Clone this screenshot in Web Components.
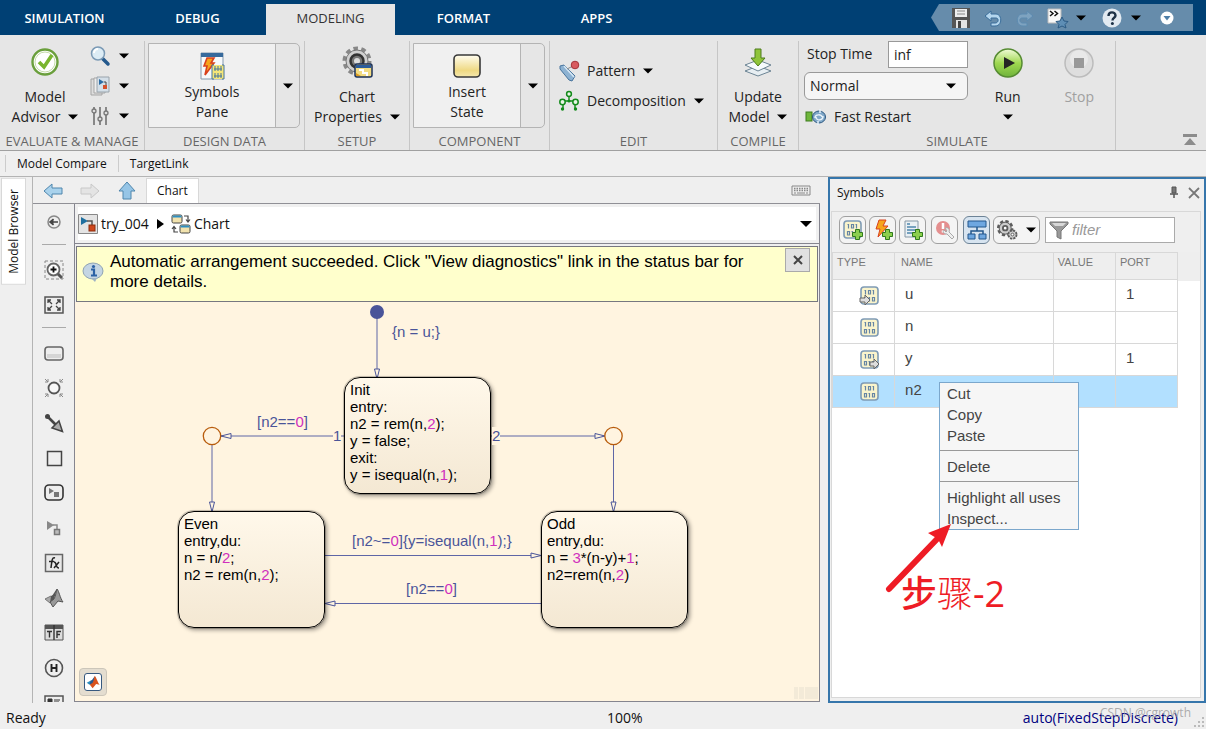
<!DOCTYPE html>
<html lang="en">
<head>
<meta charset="utf-8">
<title>Chart</title>
<style>
    html, body {
        margin: 0;
        height: 100%;
    }

    body {
        background: #efefef;
        color: #111;
        font: 14px/20px "Open Sans", "Noto Sans", sans-serif;
    }
</style>
</head>
<body>
<chart-editor-app></chart-editor-app>

<script>
const PLUS = `<path d="M12.5 9.5h4v3h3v4h-3v3h-4v-3h-3v-4h3z" fill="#8ccf4d" stroke="#2f7a1c"/>`;
const DATA = `<rect x="1" y="1" width="17" height="17" rx="3" fill="#faf4cc" stroke="#7f9bb5" stroke-width="1.6"/>
    <path d="M5.500 4v4.500M4.500 4.500h1M13.500 4v4.500M12.500 4.500h1M9.500 11v4.500M8.500 11.500h1" stroke="#6685a3" stroke-width="1.200" fill="none"/>
    <path d="M8.500 4.500h2v3.500h-2zM4.500 11.500h2v3.500h-2zM12.500 11.500h2v3.500h-2z" stroke="#6685a3" stroke-width="1.200" fill="none"/>`;
const PEAK = (a, b, c) => `<path d="M1 11l6-3 2 2-4 4z" fill="${a}"/><path d="M7 8c3-1 4-6 6-6l-2 9-3 4-3-2z" fill="${b}"/><path d="M12.500 1c2 2 4 9 7 13l-5-1-5 6-4-5 4-3c2-3 2-8 3-10z" fill="${c}"/>`;

// every icon is [viewBox size, markup]
const ICONS = {
    caret: [10, `<path d="M0 2.500h10L5 7.500z" fill="#000"/>`],
    caretRight: [10, `<path d="M2 0v10L9 5z" fill="#000"/>`],
    check: [32, `<circle cx="16" cy="16" r="12.500" fill="#fff" stroke="#6a9f3c" stroke-width="2.400"/><circle cx="16" cy="16" r="10" fill="none" stroke="#c5dba9"/><path d="M10 16l5 5 8-12" fill="none" stroke="#79b52f" stroke-width="3.600"/>`],
    magnifier: [20, `<path d="M12 12l6 6" stroke="#24598d" stroke-width="3.500" stroke-linecap="round"/><circle cx="8" cy="7.500" r="6.500" fill="#dcecf5" stroke="#7b9ab5" stroke-width="1.500"/><path d="M4 7a4 4 0 0 1 4-4" stroke="#fff" stroke-width="2" fill="none"/>`],
    compare: [20, `<path d="M1 3h11v16H1z" fill="#ddd" stroke="#a5a5a5"/><path d="M4 2h11v15H4z" fill="#eee" stroke="#a5a5a5"/><path d="M7 1h12v15H7z" fill="#d4dfe8" stroke="#9aa4ac"/><path d="M9 3l5 3-5 3z" fill="#2c6da5"/><path d="M14 6h2v4" stroke="#444" fill="none"/><rect x="13" y="9" width="4" height="4" fill="#d5512b"/>`],
    sliders: [20, `<path d="M4 1v18M10 1v18M16 1v18" stroke="#888" stroke-width="2"/><g fill="#ddd" stroke="#777" stroke-width="1.300"><circle cx="4" cy="5" r="2"/><circle cx="10" cy="13" r="2"/><circle cx="16" cy="7" r="2"/></g>`],
    symbols: [32, `<path d="M5 4h22v26H5z" fill="#f7f9fb" stroke="#8499ad"/><path d="M5 4h22v4H5z" fill="#376a9c"/><path d="M11 9h7l-3 5h3l-9 12 2-9H8z" fill="#f6a51c" stroke="#d9411e" stroke-width="1.600"/><path d="M16 16h12v14H16z" fill="#f5e678"/><path d="M18 16h-2v14h2M26 16h2v14h-2M19 17v5M22 17v5M25 17v5M19 24v5M22 24v5M25 24v5M18 20h8M18 27h8" fill="none" stroke="#44749c"/>`],
    chartProps: [32, `<circle cx="16" cy="15" r="12.500" fill="none" stroke="#888" stroke-width="4" stroke-dasharray="4.500 3.354"/><circle cx="16" cy="15" r="11" fill="#d0d0d0" stroke="#777"/><circle cx="16" cy="15" r="6.500" fill="#777" stroke="#333" stroke-width="2.500"/><circle cx="16" cy="15" r="3" fill="#ddd"/><rect x="14" y="18" width="17" height="13" rx="2" fill="#f3dc82" stroke="#1c3158" stroke-width="1.500"/><path d="M15 19h15v3H15z" fill="#2c5c9b"/><path d="M18 24h4v3h4v3" fill="none" stroke="#fff" stroke-width="2"/><path d="M15 27l5 3h-5z" fill="#d99a20"/>`],
    state: [32, `<defs><linearGradient id="g" x2="0" y2="1"><stop offset="0" stop-color="#fffdf0"/><stop offset=".7" stop-color="#efd983"/><stop offset="1" stop-color="#f5e8ad"/></linearGradient></defs><rect x="3" y="6" width="26" height="22" rx="4" fill="url(#g)" stroke="#383838" stroke-width="1.600"/>`],
    pattern: [20, `<path d="M1 5l4-1 11 11-3 5-3-1L1 8z" fill="#8db2d2" stroke="#48749d"/><path d="M5 5l10 11" stroke="#d8e8f4" stroke-width="1.500"/><path d="M8 8l6-3" stroke="#888"/><circle cx="16" cy="4" r="3.800" fill="#d85b5f" stroke="#a33338"/>`],
    decomposition: [20, `<path d="M10 5v4M4 10h12M4 13v5M16 13v5" stroke="#138a1b" stroke-width="1.400" fill="none"/><g fill="#e8f6e4" stroke="#138a1b" stroke-width="1.500"><circle cx="10" cy="3" r="2.400"/><circle cx="3.500" cy="11" r="2.700"/><circle cx="16.500" cy="11" r="2.700"/></g><g fill="#138a1b"><circle cx="3.500" cy="18" r="1.700"/><circle cx="10" cy="10" r="1.500"/><circle cx="16.500" cy="18" r="1.700"/></g>`],
    update: [32, `<path d="M3 25l13-5 13 5-13 5z" fill="#e7eef2" stroke="#6c8494"/><path d="M3 19l13-5 13 5-13 6z" fill="#f6fafc" stroke="#6c8494"/><path d="M13 3h6v9h4l-7 8-7-8h4z" fill="#8fc43a" stroke="#4e7c1d"/>`],
    restart: [20, `<rect x="0" y="5" width="6" height="9" fill="#6fb63b" stroke="#3c7c1f"/><ellipse cx="13" cy="10" rx="6.500" ry="6" fill="#7fa7c8" stroke="#2a567f"/><path d="M9 11c0-4 7-4 7-1M17 9c0 5-7 5-7 1M14 2v4M12 14v4" fill="none" stroke="#e8f2fa" stroke-width="1.500"/>`],
    run: [32, `<defs><linearGradient id="g" x2="0" y2="1"><stop offset="0" stop-color="#f2fbd9"/><stop offset=".5" stop-color="#9fd850"/><stop offset="1" stop-color="#6fb33b"/></linearGradient></defs><circle cx="16" cy="17" r="14" fill="url(#g)" stroke="#568b32" stroke-width="1.500"/><path d="M12 11l11 6-11 6z" fill="#242424"/>`],
    stop: [32, `<circle cx="16" cy="17" r="14" fill="#dedede" stroke="#bcbcbc" stroke-width="1.500"/><circle cx="16" cy="13" r="9" fill="#e9e9e9"/><rect x="11" y="12" width="10" height="10" fill="#999"/>`],
    collapse: [20, `<path d="M3 4h14v3H3zM10 8l6 7H4z" fill="#8c8c8c"/>`],
    save: [20, `<path d="M1 0h18v20H1z" fill="#555"/><path d="M4 1h12v8H4z" fill="#eee"/><path d="M6 3h8M6 6h8" stroke="#888"/><path d="M5 12h11v8H5z" fill="#e4e4e4"/><path d="M7 13h3v7H7z" fill="#444"/>`],
    undo: [20, `<path d="M2 8l6-5v3h5c6 0 7 12-1 12H8v-3h4c4 0 4-5 1-5H8v3z" fill="#b4d6ee" stroke="#3a6d99"/>`],
    redo: [20, `<path d="M18 8l-6-5v3H7c-6 0-7 12 1 12h4v-3H8c-4 0-4-5-1-5h5v3z" fill="#7ea3c0" stroke="#5d8bb0"/>`],
    shortcuts: [20, `<path d="M1 1h13v14H1z" fill="#f8f8f8" stroke="#bbb"/><path d="M3 3l3 2.500-3 2.500M7.500 3l3 2.500-3 2.500" fill="none" stroke="#111" stroke-width="1.500"/><path d="M15 9l2 4 4 .5-3 3 1 3.500-4-2-4 2 1-3.500-3-3 4-.5z" fill="#5e8eb5" stroke="#2c5b85"/>`],
    help: [20, `<circle cx="10" cy="10" r="9.500" fill="#e2eaf1"/><path d="M6.500 8c0-5 7-4.500 7-.5 0 2.500-3 2-3 5" fill="none" stroke="#1e3247" stroke-width="2.400"/><circle cx="10.400" cy="15.500" r="1.500" fill="#1e3247"/>`],
    more: [20, `<circle cx="10" cy="10" r="6.500" fill="#fff"/><path d="M6.500 8h7L10 12.500z" fill="#4f7fa8"/>`],
    back: [20, `<path d="M1 11l8-7v4h10v6H9v4z" fill="#a9d2ec" stroke="#4f86ad"/>`],
    forward: [20, `<path d="M19 11l-8-7v4H1v6h10v4z" fill="#e4e4e4" stroke="#c8c8c8"/>`],
    up: [20, `<path d="M10 2l8 9h-4v8H6v-8H2z" fill="#96c5e6" stroke="#4f86ad"/>`],
    keyboard: [20, `<path d="M1 6h18v9H1z" fill="#eee" stroke="#888"/><path d="M3 8.500h14M3 10.500h14" stroke="#888" stroke-width="1.500" stroke-dasharray="1.500 1"/><path d="M3 13h2M6 13h8M15 13h2" stroke="#888"/>`],
    model: [20, `<path d="M.5.500h19v19H.5z" fill="#e4e4e4" stroke="#888"/><path d="M3 3l7 4-7 4z" fill="#1f6f9f"/><path d="M9 7h5v4" fill="none" stroke="#555" stroke-width="1.500"/><rect x="11" y="11" width="6" height="6" fill="#cf481d" stroke="#8c2c0d"/>`],
    chart: [20, `<rect x="1" y="1" width="10" height="8" rx="1.500" fill="#f2e3ae" stroke="#444"/><path d="M1.500 1.500h9v2h-9z" fill="#2e8fc4"/><rect x="9" y="11" width="10" height="8" rx="1.500" fill="#f2e3ae" stroke="#444"/><path d="M9.500 11.500h9v2h-9z" fill="#2e8fc4"/><path d="M13 2h4v5M15 5.500l2 2.500 2-2.500M7 18H3v-5M1 15l2-2.500L5 15" fill="none" stroke="#444" stroke-width="1.200"/>`],
    info: [22, `<ellipse cx="11" cy="10" rx="10" ry="8" fill="#c4d5e3" stroke="#8fa3b3"/><path d="M9 17l6 0-2 4z" fill="#9fb3c3"/><circle cx="11.500" cy="5.500" r="1.600" fill="#2c62a5"/><path d="M9 8.500h3v6M9 14.500h6" fill="none" stroke="#2c62a5" stroke-width="2.200"/>`],
    cross: [10, `<path d="M1 1l8 8M9 1L1 9" stroke="#444" stroke-width="2"/>`],
    close: [12, `<path d="M1 1l10 10M11 1L1 11" stroke="#777" stroke-width="1.800"/>`],
    hide: [20, `<circle cx="10" cy="10" r="6" fill="#eee" stroke="#888" stroke-width="1.500"/><path d="M6 10h8M9.500 7L6 10l3.500 3" fill="#444" stroke="#444" stroke-width="1.600"/>`],
    zoomIn: [20, `<path d="M1 1h18v18H1z" fill="none" stroke="#888" stroke-dasharray="3 2"/><circle cx="9.500" cy="9.500" r="6" fill="#fff" stroke="#666" stroke-width="1.800"/><path d="M14 14l4 4" stroke="#555" stroke-width="3"/><path d="M6.500 9.500h6M9.500 6.500v6" stroke="#111" stroke-width="1.800"/>`],
    fit: [20, `<path d="M1 2h18v16H1z" fill="#eee" stroke="#555" stroke-width="1.500"/><path d="M4 8V5h3M4 5l4 4M13 5h3v3M16 5l-4 4M4 12v3h3M4 15l4-4M16 12v3h-3M16 15l-4-4" fill="none" stroke="#444" stroke-width="1.300"/>`],
    paletteState: [20, `<rect x="1" y="4" width="18" height="13" rx="3" fill="#eee" stroke="#666" stroke-width="1.600"/><path d="M3 11h14v4H3z" fill="#d5d5d5"/>`],
    junction: [20, `<circle cx="10" cy="10" r="5.500" fill="#f8f8f8" stroke="#555" stroke-width="1.800"/><path d="M1 1l3 3M4 1v3H1M19 1l-3 3M16 1v3h3M1 19l3-3M1 16h3v3M19 19l-3-3M16 19v-3h3" fill="none" stroke="#888"/>`],
    transition: [20, `<circle cx="3.500" cy="3.500" r="2.500" fill="#444"/><path d="M4 4l9 9" stroke="#444" stroke-width="2.600"/><path d="M15 8l3.500 10.500L8 15z" fill="#aaa" stroke="#444" stroke-width="1.500"/>`],
    box: [20, `<path d="M3.500 3.500h14v14h-14z" fill="#eee" stroke="#444" stroke-width="1.500"/>`],
    simState: [20, `<rect x="1" y="2" width="18" height="15" rx="4" fill="#eee" stroke="#333" stroke-width="1.600"/><path d="M5 5l5 3-5 3zM10 9h5v5h-5z" fill="#777"/>`],
    simFunction: [20, `<path d="M3 3l7 4-7 5z" fill="#888"/><path d="M9 7h4v4" fill="none" stroke="#888" stroke-width="1.500"/><path d="M10.500 11.500h5v5h-5z" fill="#bbb" stroke="#777" stroke-width="1.500"/>`],
    fx: [20, `<path d="M1.500 1.500h17v17h-17z" fill="#e8e8e8" stroke="#666" stroke-width="1.500"/><path d="M11 5c-3-1-3 2-4 10M5 8.500h5M10 9c3 0 1 6 5 6M15 9l-5 6" fill="none" stroke="#222" stroke-width="1.500"/>`],
    matlabGray: [20, `<path d="M1 11l6-3 3 3-4 4z" fill="#aaa" stroke="#777"/><path d="M7 8c3-1 4-6 6-7l-3 10-4 4z" fill="#555"/><path d="M13 1c2 2 3 9 6 13l-5-1-5 6-3-5 4-3c2-3 2-8 3-10z" fill="#999" stroke="#555"/>`],
    matlab: [20, PEAK("#2c8fc0", "#2a5a8d", "#d9531e")],
    truth: [20, `<path d="M1 2h18v15H1z" fill="#ddd" stroke="#555"/><path d="M1 2h18v4H1z" fill="#555"/><path d="M10 2v15M3 8.500h5M5.500 8.500v6M13 15V8.500h4M13 11.500h3" fill="none" stroke="#333" stroke-width="1.400"/>`],
    history: [20, `<circle cx="10" cy="10" r="8.500" fill="#eee" stroke="#555" stroke-width="1.600"/><path d="M7.500 6v8M12.500 6v8M7.500 10h5" stroke="#222" stroke-width="1.900"/>`],
    annotation: [20, `<path d="M1 3h18v13H1z" fill="#eee" stroke="#555" stroke-width="1.500"/><path d="M4 6h4v3H4zM10 7h6M10 9h5" fill="#333" stroke="#333"/>`],
    pin: [14, `<path d="M5 1h4v6H5z" fill="#777" stroke="#555"/><path d="M3 8h8M7 8.500V12" stroke="#555" stroke-width="1.500"/>`],
    addData: [20, DATA + PLUS],
    addEvent: [20, `<path d="M6 0h7l-3 6h5L5 17l2-8H3z" fill="#f6a51c" stroke="#d9411e"/>` + PLUS],
    addMessage: [20, `<path d="M2 1h13v16H2z" fill="#eaf0f4" stroke="#8698a6"/><path d="M4 4h3M4 7h9M4 10h9M4 13h6" stroke="#4f86ad" stroke-width="1.500"/>` + PLUS],
    resolve: [20, `<circle cx="8" cy="8" r="7" fill="#e48f8f"/><path d="M8 3v6M8 10.500v2" stroke="#fff" stroke-width="2.500"/><path d="M10 8c3-1 5 1 4 4l5 5-2 2-5-5c-3 0-5-2-3-4l2 2 1-1z" fill="#eee" stroke="#aaa"/>`],
    hierarchy: [20, `<path d="M10 7v4M4 14v-3h12v3" fill="none" stroke="#23578c" stroke-width="1.500"/><g fill="#6ea7e0" stroke="#23578c"><path d="M1 1h18v6H1zM1 14h7v5H1zM12 14h7v5h-7z"/></g>`],
    gears: [22, `<g fill="#ccc" stroke="#5c5c5c"><circle cx="9" cy="9" r="7.500" stroke-width="3" stroke-dasharray="3.500 2.390"/><circle cx="9" cy="9" r="6.500"/><circle cx="9" cy="9" r="2.500" fill="#fff" stroke-width="2"/><circle cx="17" cy="16" r="4.500" stroke-width="2" stroke-dasharray="2.500 1.030"/><circle cx="17" cy="16" r="1.500" fill="#fff"/></g>`],
    funnel: [20, `<path d="M1 2h18v2l-7 7v8l-4-2v-6L1 4z" fill="#999" stroke="#777"/><path d="M3 3h14l-3 3H6z" fill="#d8d8d8"/>`],
    data: [20, DATA],
    input: [20, DATA + `<path d="M0 12h5v-3l5 5-5 5v-3H0z" fill="#ddd" stroke="#666"/>`],
    output: [20, DATA + `<path d="M10 12h4v-3l5 5-5 5v-3h-4z" fill="#ddd" stroke="#666"/>`]
};

class UiIcon extends HTMLElement {
    connectedCallback() {
        const [box, markup] = ICONS[this.getAttribute("name")];
        const size = this.getAttribute("size") || box;
        this.attachShadow({ mode: "open" }).innerHTML = `
            <style>
                :host { display: inline-block; flex: none; line-height: 0; }
                svg { display: block; overflow: visible; }
            </style>
            <svg width="${size}" height="${size}" viewBox="0 0 ${box} ${box}" aria-hidden="true">${markup}</svg>`;
    }
}
customElements.define("ui-icon", UiIcon);

// Icon button without text
class ToolButton extends HTMLElement {
    connectedCallback() {
        const caret = this.hasAttribute("menu") ? `<ui-icon name="caret"></ui-icon>` : "";
        this.attachShadow({ mode: "open" }).innerHTML = `
            <style>
                :host { display: inline-flex; }
                button {
                    display: flex;
                    align-items: center;
                    justify-content: center;
                    gap: 9px;
                    width: 100%;
                    padding: 0;
                    border: 0;
                    background: none;
                }
                :host([framed]) button {
                    min-width: 27px;
                    height: 28px;
                    padding: 0 2px;
                    box-sizing: border-box;
                    border: 1px solid #a0a0a0;
                    border-radius: 6px;
                    background: #f4f4f4;
                }
                :host([framed][menu]) button { width: 47px; }
                :host([framed][active]) button { background: #d7e4f0; border-color: #6d8396; }
            </style>
            <button aria-label="${this.getAttribute("label")}">
                <ui-icon name="${this.getAttribute("icon")}" size="${this.getAttribute("size") || 20}"></ui-icon>${caret}
            </button>`;
    }
}
customElements.define("tool-button", ToolButton);

class TabStrip extends HTMLElement {
    connectedCallback() {
        const tabs = ["SIMULATION", "DEBUG", "MODELING", "FORMAT", "APPS"];
        this.attachShadow({ mode: "open" }).innerHTML = `
            <style>
                :host {
                    display: flex;
                    justify-content: space-between;
                    height: 35px;
                    background: #004074;
                }
                nav { display: flex; gap: 4px; padding: 4px 0 0; }
                nav button {
                    width: 129px;
                    padding: 0 0 3px;
                    border: 0;
                    background: none;
                    color: #fff;
                    font: 600 13px/20px "Open Sans", sans-serif;
                }
                nav button[aria-selected=true] {
                    background: #e6e6e6;
                    color: #333;
                    font-weight: 400;
                }
                .quick {
                    display: flex;
                    align-items: center;
                    gap: 12px;
                    height: 27px;
                    margin: 4px 13px 0 0;
                    padding: 0 16px 0 20px;
                    background: #668cab;
                    clip-path: polygon(8px 0, 100% 0, 100% 100%, 8px 100%, 0 50%);
                }
                .quick [menu] { margin-right: 4px; }
            </style>
            <nav role="tablist">
                ${tabs.map(t => `<button role="tab" aria-selected="${t === "MODELING"}">${t}</button>`).join("")}
            </nav>
            <div class="quick">
                <tool-button icon="save" label="Save"></tool-button>
                <tool-button icon="undo" label="Undo"></tool-button>
                <tool-button icon="redo" label="Redo"></tool-button>
                <tool-button icon="shortcuts" label="Favorites" menu></tool-button>
                <tool-button icon="help" label="Help" menu></tool-button>
                <tool-button icon="more" label="More"></tool-button>
            </div>`;
    }
}
customElements.define("tab-strip", TabStrip);

class RibbonSection extends HTMLElement {
    connectedCallback() {
        this.attachShadow({ mode: "open" }).innerHTML = `
            <style>
                :host {
                    display: flex;
                    flex-direction: column;
                    flex: none;
                    box-sizing: border-box;
                    border-right: 1px solid #c6c6c6;
                }
                .body { display: flex; height: 91px; }
                h2 {
                    margin: 0;
                    color: #666;
                    font-size: 13px;
                    font-weight: 400;
                    line-height: 18px;
                    text-align: center;
                    white-space: nowrap;
                }
            </style>
            <div class="body"><slot></slot></div>
            <h2>${this.getAttribute("heading")}</h2>`;
    }
}
customElements.define("ribbon-section", RibbonSection);

// Large button: icon above two lines of text
class BigButton extends HTMLElement {
    connectedCallback() {
        const caret = this.hasAttribute("menu") ? `<ui-icon name="caret"></ui-icon>` : "";
        this.attachShadow({ mode: "open" }).innerHTML = `
            <style>
                :host { display: flex; flex: 1; }
                button {
                    flex: 1;
                    display: flex;
                    flex-direction: column;
                    align-items: center;
                    padding: 5px 0 0;
                    border: 0;
                    background: none;
                    color: inherit;
                    font: inherit;
                    white-space: nowrap;
                }
                button:disabled { color: #a0a0a0; }
                .text { margin-top: 9px; }
                .last { display: flex; align-items: center; justify-content: center; gap: 8px; min-height: 20px; }
                :host([gallery]) .text { margin-top: 1px; }
            </style>
            <button ${this.hasAttribute("disabled") ? "disabled" : ""}>
                <ui-icon name="${this.getAttribute("icon")}"></ui-icon>
                <span class="text">
                    <span>${this.getAttribute("line1")}</span>
                    <span class="last">${this.getAttribute("line2") || ""}${caret}</span>
                </span>
            </button>`;
    }
}
customElements.define("big-button", BigButton);

class GalleryBox extends HTMLElement {
    connectedCallback() {
        this.attachShadow({ mode: "open" }).innerHTML = `
            <style>
                :host {
                    display: flex;
                    flex: 1;
                    margin: 2px 4px 4px 3px;
                    border: 1px solid #b4b4b4;
                    border-radius: 0 5px 5px 0;
                }
                .main { display: flex; flex: 1; background: #f0f0f0; }
                tool-button { width: 23px; border-left: 1px solid #b4b4b4; }
            </style>
            <div class="main"><slot></slot></div>
            <tool-button icon="caret" size="10" label="Show more"></tool-button>`;
    }
}
customElements.define("gallery-box", GalleryBox);

class RowButton extends HTMLElement {
    connectedCallback() {
        const caret = this.hasAttribute("menu") ? `<ui-icon name="caret"></ui-icon>` : "";
        this.attachShadow({ mode: "open" }).innerHTML = `
            <style>
                :host { display: flex; }
                button {
                    display: flex;
                    align-items: center;
                    gap: 8px;
                    padding: 0;
                    border: 0;
                    background: none;
                    color: inherit;
                    font: inherit;
                    white-space: nowrap;
                }
            </style>
            <button>
                <ui-icon name="${this.getAttribute("icon")}"></ui-icon><slot></slot>${caret}
            </button>`;
    }
}
customElements.define("row-button", RowButton);

class RibbonBar extends HTMLElement {
    connectedCallback() {
        this.attachShadow({ mode: "open" }).innerHTML = `
            <style>
                :host {
                    display: flex;
                    padding-top: 6px;
                    background: #e6e6e6;
                    border-bottom: 1px solid #a0a0a0;
                    color: #222;
                }
                .stack { display: grid; grid-auto-rows: 30px; align-items: center; }
                .evaluate { width: 145px; }
                .evaluate .stack { width: 54px; justify-items: start; }
                .design { width: 160px; }
                .setup { width: 105px; }
                .component { width: 140px; }
                .edit { width: 168px; }
                .edit .stack { padding: 15px 0 15px 9px; }
                .compile { width: 81px; }
                .simulate { width: 317px; }
                .form {
                    display: grid;
                    grid-template-rows: 26px 26px 24px;
                    gap: 6px;
                    width: 164px;
                    margin-left: 5px;
                    align-items: center;
                }
                .time { display: flex; align-items: center; justify-content: space-between; padding-left: 3px; }
                .form row-button { padding-left: 2px; }
                input, select {
                    box-sizing: border-box;
                    border: 1px solid #999;
                    background: #fff;
                    color: #222;
                    font: inherit;
                }
                input { width: 80px; height: 27px; padding: 0 5px; }
                .mode { display: grid; align-items: center; }
                .mode > * { grid-area: 1 / 1; }
                select {
                    appearance: none;
                    width: 100%;
                    height: 28px;
                    padding: 0 5px;
                    border-radius: 6px;
                    background: #f5f5f5;
                }
                .mode ui-icon { justify-self: end; margin-right: 12px; pointer-events: none; }
                .runs { display: flex; flex: 1; padding: 0 0 0 4px; }
                .end { display: flex; flex: 1; align-items: flex-end; justify-content: flex-end; padding: 0 6px; }
            </style>
            <ribbon-section class="evaluate" heading="EVALUATE &amp; MANAGE">
                <big-button icon="check" line1="Model" line2="Advisor" menu></big-button>
                <div class="stack">
                    <tool-button icon="magnifier" label="Find" menu></tool-button>
                    <tool-button icon="compare" label="Compare" menu></tool-button>
                    <tool-button icon="sliders" label="Environment" menu></tool-button>
                </div>
            </ribbon-section>
            <ribbon-section class="design" heading="DESIGN DATA">
                <gallery-box><big-button gallery icon="symbols" line1="Symbols" line2="Pane"></big-button></gallery-box>
            </ribbon-section>
            <ribbon-section class="setup" heading="SETUP">
                <big-button icon="chartProps" line1="Chart" line2="Properties" menu></big-button>
            </ribbon-section>
            <ribbon-section class="component" heading="COMPONENT">
                <gallery-box><big-button gallery icon="state" line1="Insert" line2="State"></big-button></gallery-box>
            </ribbon-section>
            <ribbon-section class="edit" heading="EDIT">
                <div class="stack">
                    <row-button icon="pattern" menu>Pattern</row-button>
                    <row-button icon="decomposition" menu>Decomposition</row-button>
                </div>
            </ribbon-section>
            <ribbon-section class="compile" heading="COMPILE">
                <big-button icon="update" line1="Update" line2="Model" menu></big-button>
            </ribbon-section>
            <ribbon-section class="simulate" heading="SIMULATE">
                <div class="form">
                    <div class="time"><label for="stop">Stop Time</label><input id="stop" value="inf"></div>
                    <div class="mode">
                        <select aria-label="Simulation mode"><option>Normal</option></select>
                        <ui-icon name="caret"></ui-icon>
                    </div>
                    <row-button icon="restart">Fast Restart</row-button>
                </div>
                <div class="runs">
                    <big-button icon="run" line1="Run" menu></big-button>
                    <big-button icon="stop" line1="Stop" disabled></big-button>
                </div>
            </ribbon-section>
            <div class="end"><tool-button icon="collapse" label="Minimize toolstrip"></tool-button></div>`;
    }
}
customElements.define("ribbon-bar", RibbonBar);

class FavoritesBar extends HTMLElement {
    connectedCallback() {
        this.attachShadow({ mode: "open" }).innerHTML = `
            <style>
                :host {
                    display: flex;
                    padding: 4px 5px;
                    border-bottom: 1px solid #b4b4b4;
                    font-size: 12px;
                    line-height: 17px;
                }
                button {
                    padding: 0 11px;
                    border: 0;
                    border-left: 1px solid #ccc;
                    background: none;
                    color: inherit;
                    font: inherit;
                }
            </style>
            <button>Model Compare</button><button>TargetLink</button>`;
    }
}
customElements.define("favorites-bar", FavoritesBar);

class ToolPalette extends HTMLElement {
    connectedCallback() {
        const groups = [
            [["hide", "Hide palette"]],
            [["zoomIn", "Zoom in"], ["fit", "Fit to view"]],
            [["paletteState", "State"], ["junction", "Junction"], ["transition", "Default transition"],
             ["box", "Box"], ["simState", "Simulink state"], ["simFunction", "Simulink function"],
             ["fx", "Graphical function"], ["matlabGray", "MATLAB function"], ["truth", "Truth table"],
             ["history", "History junction"], ["annotation", "Annotation"]]
        ];
        this.attachShadow({ mode: "open" }).innerHTML = `
            <style>
                :host { display: block; overflow: hidden; }
                tool-button { display: flex; height: 35px; }
                hr { width: 24px; margin: 5px auto 7px; border: 0; border-top: 1px solid #aaa; }
            </style>
            ${groups.map(g => g.map(([icon, label]) =>
                `<tool-button icon="${icon}" label="${label}"></tool-button>`).join("")).join("<hr>")}`;
    }
}
customElements.define("tool-palette", ToolPalette);

// Numbers in action language are coloured, digits inside identifiers are not
function highlight(text) {
    return text.trim().replace(/(?<![A-Za-z])\d+/g, n => `<span class="num">${n}</span>`);
}

class ChartState extends HTMLElement {
    connectedCallback() {
        const lines = this.textContent.trim().split("\n");
        this.attachShadow({ mode: "open" }).innerHTML = `
            <style>
                :host {
                    position: absolute;
                    box-sizing: border-box;
                    width: 147px;
                    height: 117px;
                    padding: 3px 5px;
                    border: 1px solid #000;
                    border-radius: 16px;
                    background: linear-gradient(#fff8ea, #f4e8d3);
                    box-shadow: 0 0 0 1px #0003, 2px 2px 4px #0006;
                    color: #000;
                    line-height: 17px;
                    white-space: nowrap;
                }
                .num { color: #d02fbd; }
            </style>
            ${lines.map(line => `<div>${highlight(line)}</div>`).join("")}`;
    }
}
customElements.define("chart-state", ChartState);

class ChartLabel extends HTMLElement {
    connectedCallback() {
        const order = this.hasAttribute("order");
        this.attachShadow({ mode: "open" }).innerHTML = `
            <style>
                :host { position: absolute; color: #4a5499; line-height: 18px; white-space: nowrap; }
                :host([order]) { background: #fff4e0; }
                .num { color: #d02fbd; }
            </style>
            <div>${order ? this.textContent : highlight(this.textContent)}</div>`;
    }
}
customElements.define("chart-label", ChartLabel);

class ChartCanvas extends HTMLElement {
    connectedCallback() {
        this.attachShadow({ mode: "open" }).innerHTML = `
            <style>
                :host {
                    display: block;
                    position: relative;
                    overflow: hidden;
                    background: #fff4e0;
                    font: 15px/18px "Liberation Sans", Arial, sans-serif;
                }
                svg { display: block; width: 100%; height: 100%; }
                .badge {
                    position: absolute;
                    left: 4px;
                    bottom: 5px;
                    padding: 4px;
                    border: 1px solid #ccc6ba;
                    border-radius: 4px;
                    background: #e4ddd0;
                    line-height: 0;
                }
                .badge ui-icon {
                    padding: 1px;
                    border: 1px solid #37597f;
                    border-radius: 3px;
                    background: #fff;
                }
                .grip { position: absolute; right: 1px; bottom: 2px; display: flex; gap: 1px; }
                .grip i { width: 4px; height: 12px; background: #f3ead8; }
                .grip i:nth-child(2) { width: 5px; }
                .grip i:last-child { width: 13px; }
            </style>
            <svg aria-hidden="true">
                <defs>
                    <marker id="tip" viewBox="0 0 12 8" refX="11" refY="4" markerWidth="12" markerHeight="8"
                        markerUnits="userSpaceOnUse" orient="auto">
                        <path d="M1 1.500L11 4 1 6.500z" fill="#fff4e0" stroke="#4a5499"/>
                    </marker>
                </defs>
                <g fill="none" stroke="#5f66a6">
                    <path d="M302 10V77" marker-end="url(#tip)"/>
                    <path d="M269 134H146" marker-end="url(#tip)"/>
                    <path d="M415 134H530" marker-end="url(#tip)"/>
                    <path d="M137 143V210" marker-end="url(#tip)"/>
                    <path d="M538.500 143V210" marker-end="url(#tip)"/>
                    <path d="M250 253.500H466" marker-end="url(#tip)"/>
                    <path d="M466 301.500H250" marker-end="url(#tip)"/>
                </g>
                <circle cx="302" cy="10" r="7" fill="#4a5499"/>
                <g fill="#fff4e0" stroke="#b85c0c" stroke-width="1.300">
                    <circle cx="137" cy="134" r="8.700"/>
                    <circle cx="538.500" cy="134" r="8.700"/>
                </g>
            </svg>
            <chart-state style="left: 269px; top: 75px">Init
entry:
n2 = rem(n,2);
y = false;
exit:
y = isequal(n,1);</chart-state>
            <chart-state style="left: 103px; top: 209px">Even
entry,du:
n = n/2;
n2 = rem(n,2);</chart-state>
            <chart-state style="left: 466px; top: 209px">Odd
entry,du:
n = 3*(n-y)+1;
n2=rem(n,2)</chart-state>
            <chart-label style="left: 317px; top: 21px">{n = u;}</chart-label>
            <chart-label style="left: 182px; top: 111px">[n2==0]</chart-label>
            <chart-label style="left: 258px; top: 125px" order>1</chart-label>
            <chart-label style="left: 417px; top: 125px" order>2</chart-label>
            <chart-label style="left: 277px; top: 230px">[n2~=0]{y=isequal(n,1);}</chart-label>
            <chart-label style="left: 331px; top: 278px">[n2==0]</chart-label>
            <button class="badge" aria-label="MATLAB chart"><ui-icon name="matlab" size="14"></ui-icon></button>
            <div class="grip"><i></i><i></i><i></i></div>`;
    }
}
customElements.define("chart-canvas", ChartCanvas);

class NoticeBar extends HTMLElement {
    connectedCallback() {
        this.attachShadow({ mode: "open" }).innerHTML = `
            <style>
                :host {
                    display: flex;
                    align-items: flex-start;
                    gap: 6px;
                    padding: 5px 7px 9px 5px;
                    border: 1px solid #777780;
                    background: #ffffcc;
                    color: #000;
                    font: 17px/20px "Liberation Sans", Arial, sans-serif;
                }
                .info { align-self: center; }
                p { flex: 1; margin: 0; }
                button {
                    display: flex;
                    align-items: center;
                    justify-content: center;
                    width: 25px;
                    height: 24px;
                    margin-top: -4px;
                    padding: 0;
                    border: 1px solid #aaa;
                    background: #e1e1e1;
                }
            </style>
            <ui-icon class="info" name="info"></ui-icon>
            <p><slot></slot></p>
            <button aria-label="Close"><ui-icon name="cross"></ui-icon></button>`;
    }
}
customElements.define("notice-bar", NoticeBar);

class PathBar extends HTMLElement {
    connectedCallback() {
        this.attachShadow({ mode: "open" }).innerHTML = `
            <style>
                :host {
                    display: flex;
                    align-items: center;
                    gap: 3px;
                    height: 33px;
                    padding: 0 4px 0 0;
                    border: 3px solid #f0f0f0;
                    background: #fff;
                    line-height: 20px;
                }
                a { display: flex; align-items: center; gap: 3px; color: #111; text-decoration: none; }
                .sep { margin: 0 3px; }
                .menu { margin-left: auto; }
            </style>
            <a href="#try_004"><ui-icon name="model"></ui-icon>try_004</a>
            <ui-icon class="sep" name="caretRight"></ui-icon>
            <a href="#chart"><ui-icon name="chart"></ui-icon>Chart</a>
            <tool-button class="menu" icon="caret" size="12" label="History"></tool-button>`;
    }
}
customElements.define("path-bar", PathBar);

class EditorPane extends HTMLElement {
    connectedCallback() {
        this.attachShadow({ mode: "open" }).innerHTML = `
            <style>
                :host {
                    display: grid;
                    grid-template: 27px minmax(0, 1fr) / 41px minmax(0, 1fr);
                    min-width: 0;
                    padding: 0 0 1px;
                    border-left: 1px solid #b4b4b4;
                }
                header {
                    grid-column: 1 / 3;
                    display: flex;
                    align-items: center;
                    padding: 0 9px 0 10px;
                    border-bottom: 1px solid #909096;
                }
                header tool-button { margin-right: 17px; }
                .tab {
                    align-self: flex-end;
                    height: 25px;
                    padding: 0 10px;
                    border: 1px solid #d8d8d8;
                    border-bottom: 0;
                    background: #fff;
                    color: #111;
                    font: 12px/20px "Open Sans", sans-serif;
                }
                header .keys { margin: 0 0 0 auto; }
                header .up { margin-right: 9px; }
                .stack {
                    display: flex;
                    flex-direction: column;
                    border: 1px solid #85858f;
                    border-top: 0;
                }
                .rule { height: 2px; border-top: 1px solid #85858f; background: #efefef; }
                notice-bar { margin: 0 1px; }
                chart-canvas { flex: 1; min-height: 0; }
            </style>
            <header>
                <tool-button icon="back" label="Back"></tool-button>
                <tool-button icon="forward" label="Forward"></tool-button>
                <tool-button class="up" icon="up" label="Up to parent"></tool-button>
                <button class="tab">Chart</button>
                <tool-button class="keys" icon="keyboard" label="Keyboard shortcuts"></tool-button>
            </header>
            <tool-palette></tool-palette>
            <div class="stack">
                <path-bar></path-bar>
                <div class="rule"></div>
                <notice-bar>Automatic arrangement succeeded. Click "View diagnostics" link in the status bar for more details.</notice-bar>
                <chart-canvas></chart-canvas>
            </div>`;
    }
}
customElements.define("editor-pane", EditorPane);

class SymbolsTable extends HTMLElement {
    connectedCallback() {
        const symbols = [
            { icon: "input", name: "u", port: "1" },
            { icon: "data", name: "n", port: "" },
            { icon: "output", name: "y", port: "1" },
            { icon: "data", name: "n2", port: "", selected: true }
        ];
        this.attachShadow({ mode: "open" }).innerHTML = `
            <style>
                :host { display: block; font: 15px/20px "Liberation Sans", Arial, sans-serif; color: #444; }
                .head { background: linear-gradient(#eee, #eee) no-repeat 0 0 / 100% 29px; padding-right: 22px; }
                table { width: 100%; border-collapse: collapse; table-layout: fixed; background: #fff; }
                th, td { border: 1px solid #d8d8d8; box-sizing: border-box; text-align: left; }
                th {
                    height: 27px;
                    padding: 0 0 8px 6px;
                    background: #eee;
                    color: #777;
                    font-size: 11px;
                    line-height: 14px;
                    font-weight: 400;
                }
                th:first-child, th:nth-child(n+3) { padding-left: 4px; }
                td { height: 32px; padding: 0 10px 4px; }
                td:first-child { padding: 0 14px 0 0; }
                td:first-child ui-icon { display: block; margin-left: auto; width: 20px; }
                .selected td { background: #b2e0ff; }
            </style>
            <div class="head">
                <table>
                    <colgroup><col style="width: 18%"><col style="width: 46%"><col style="width: 18%"><col style="width: 18%"></colgroup>
                    <thead><tr><th>TYPE</th><th>NAME</th><th>VALUE</th><th>PORT</th></tr></thead>
                    <tbody>
                        ${symbols.map(s => `<tr class="${s.selected ? "selected" : ""}">
                            <td><ui-icon name="${s.icon}"></ui-icon></td><td>${s.name}</td><td></td><td>${s.port}</td>
                        </tr>`).join("")}
                    </tbody>
                </table>
            </div>`;
    }
}
customElements.define("symbols-table", SymbolsTable);

class ContextMenu extends HTMLElement {
    connectedCallback() {
        const groups = [["Cut", "Copy", "Paste"], ["Delete"], ["Highlight all uses", "Inspect..."]];
        this.attachShadow({ mode: "open" }).innerHTML = `
            <style>
                :host {
                    display: block;
                    box-sizing: border-box;
                    width: 140px;
                    border: 1px solid #7ba7cc;
                    background: #f6f6f6;
                }
                button {
                    display: block;
                    width: 100%;
                    padding: 0 7px;
                    border: 0;
                    background: none;
                    color: #444;
                    font: 15px/21px "Liberation Sans", Arial, sans-serif;
                    text-align: left;
                    white-space: nowrap;
                }
                hr { margin: 4px 0 5px; border: 0; border-top: 1px solid #999; }
            </style>
            ${groups.map(g => g.map(t => `<button role="menuitem">${t}</button>`).join("")).join("<hr>")}`;
    }
}
customElements.define("context-menu", ContextMenu);

// Red arrow and step caption drawn over the panel
class StepNote extends HTMLElement {
    connectedCallback() {
        this.attachShadow({ mode: "open" }).innerHTML = `
            <style>
                :host {
                    display: block;
                    width: 124px;
                    color: #ee1c25;
                    font: 36px/40px "Open Sans", "Noto Sans CJK SC", sans-serif;
                }
                svg { display: block; }
                p { margin: -20px 0 0 16px; white-space: nowrap; }
                b { font-weight: 500; }
                .thin { font-weight: 300; }
            </style>
            <svg width="70" height="72" viewBox="0 0 70 72" aria-hidden="true">
                <path d="M4 67L54 15" stroke="#ee1c25" stroke-width="6" stroke-linecap="round"/>
                <path d="M66 2L57 25 53 17 43 11z" fill="#ee1c25"/>
            </svg>
            <p><b>步</b><span class="thin">骤</span>-2</p>`;
    }
}
customElements.define("step-note", StepNote);

class SymbolsPanel extends HTMLElement {
    connectedCallback() {
        this.attachShadow({ mode: "open" }).innerHTML = `
            <style>
                :host {
                    display: flex;
                    flex-direction: column;
                    position: relative;
                    box-sizing: border-box;
                    border: 2px solid #3676ab;
                }
                header { display: flex; align-items: center; height: 32px; padding: 0 4px 4px 7px; box-sizing: border-box; }
                h1 { flex: 1; margin: 0; font-size: 12px; line-height: 20px; font-weight: 400; }
                header tool-button + tool-button { margin-left: 7px; }
                .content {
                    flex: 1;
                    margin: 0 3px 3px 1px;
                    border: 1px solid #d8d8d8;
                    background: #fff;
                }
                .tools {
                    display: flex;
                    align-items: center;
                    gap: 3px;
                    height: 40px;
                    padding: 0 25px 4px 7px;
                    box-sizing: border-box;
                    background: #efefef;
                }
                .group { display: flex; gap: 3px; margin-right: 2px; }
                .filter {
                    display: flex;
                    align-items: center;
                    flex: 1;
                    min-width: 0;
                    height: 26px;
                    box-sizing: border-box;
                    padding-left: 3px;
                    border: 1px solid #aaa;
                    background: #fff;
                }
                .filter input {
                    flex: 1;
                    min-width: 0;
                    padding: 0 3px;
                    border: 0;
                    background: none;
                    font: italic 15px/20px "Liberation Sans", Arial, sans-serif;
                }
                .filter input::placeholder { color: #999; }
                context-menu { position: absolute; left: 109px; top: 203px; }
                step-note { position: absolute; left: 55px; top: 343px; }
            </style>
            <header>
                <h1>Symbols</h1>
                <tool-button icon="pin" size="14" label="Pin"></tool-button>
                <tool-button icon="close" size="12" label="Close"></tool-button>
            </header>
            <div class="content">
                <div class="tools">
                    <div class="group">
                        <tool-button framed icon="addData" label="Create data"></tool-button>
                        <tool-button framed icon="addEvent" label="Create event"></tool-button>
                        <tool-button framed icon="addMessage" label="Create message"></tool-button>
                    </div>
                    <div class="group">
                        <tool-button framed icon="resolve" label="Resolve undefined symbols"></tool-button>
                    </div>
                    <div class="group">
                        <tool-button framed active icon="hierarchy" label="View by hierarchy"></tool-button>
                        <tool-button framed icon="gears" label="Preferences" menu></tool-button>
                    </div>
                    <label class="filter"><ui-icon name="funnel"></ui-icon><input placeholder="filter" aria-label="Filter symbols"></label>
                </div>
                <symbols-table></symbols-table>
            </div>
            <context-menu></context-menu>
            <step-note></step-note>`;
    }
}
customElements.define("symbols-panel", SymbolsPanel);

class StatusBar extends HTMLElement {
    connectedCallback() {
        this.attachShadow({ mode: "open" }).innerHTML = `
            <style>
                :host {
                    display: grid;
                    grid-template-columns: 1fr 1fr;
                    align-items: center;
                    position: relative;
                    height: 26px;
                }
                .left { padding: 3px 6px 0; }
                .right { display: flex; justify-content: space-between; padding: 3px 28px 0 4px; }
                a { color: #000080; text-decoration: none; }
                .mark {
                    position: absolute;
                    right: 15px;
                    top: 1px;
                    color: #999c;
                    font-size: 12px;
                    line-height: 18px;
                }
                .grip { position: absolute; right: 2px; bottom: 2px; }
            </style>
            <span class="left">Ready</span>
            <span class="right"><span>100%</span><a href="#solver">auto(FixedStepDiscrete)</a></span>
            <span class="mark">CSDN @cgrowth</span>
            <svg class="grip" width="10" height="10" fill="#bbb" aria-hidden="true">
                <path d="M8 0h2v2H8zM4 4h2v2H4zM8 4h2v2H8zM0 8h2v2H0zM4 8h2v2H4zM8 8h2v2H8z"/>
            </svg>`;
    }
}
customElements.define("status-bar", StatusBar);

class ChartEditorApp extends HTMLElement {
    connectedCallback() {
        this.attachShadow({ mode: "open" }).innerHTML = `
            <style>
                :host { display: flex; flex-direction: column; height: 100vh; overflow: hidden; }
                main {
                    flex: 1;
                    min-height: 0;
                    display: grid;
                    grid-template-columns: 32px minmax(0, 1fr) 378px;
                    grid-template-rows: minmax(0, 1fr);
                }
                .browser {
                    justify-self: start;
                    align-self: start;
                    width: 25px;
                    margin: 1px;
                    padding: 10px 2px;
                    border: 1px solid #d8d8d8;
                    background: #fff;
                    color: #111;
                    font: 12px/18px "Open Sans", sans-serif;
                    writing-mode: vertical-rl;
                    transform: rotate(180deg);
                }
                editor-pane { margin-right: 8px; }
            </style>
            <tab-strip></tab-strip>
            <ribbon-bar></ribbon-bar>
            <favorites-bar></favorites-bar>
            <main>
                <button class="browser">Model Browser</button>
                <editor-pane></editor-pane>
                <symbols-panel></symbols-panel>
            </main>
            <status-bar></status-bar>`;
    }
}
customElements.define("chart-editor-app", ChartEditorApp);
</script>
</body>
</html>
